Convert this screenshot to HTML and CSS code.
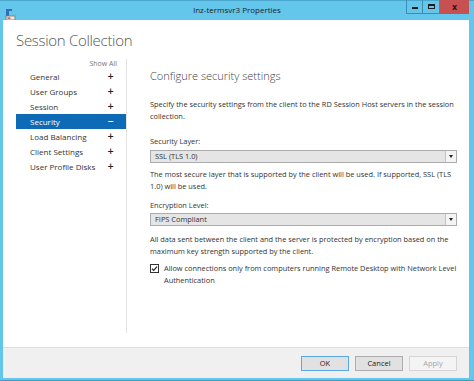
FILE: index.html
```html
<!doctype html>
<html lang="en">
<head>
    <meta charset="UTF-8">
    <title>lnz-termsvr3 Properties</title>
    <link rel="stylesheet" href="styles.css">
</head>
<body>
    <div class="window">
        <!-- Title bar -->
        <div class="titlebar">
            <div class="tb-left">
                <svg class="app-icon" width="11" height="12" viewBox="0 0 11 12">
                    <rect x="1" y="0" width="3" height="8" fill="#2f6fb6"/>
                    <rect x="4" y="0" width="3" height="2" fill="#2f6fb6"/>
                    <rect x="1" y="7" width="9" height="4" fill="#e8e8e8" stroke="#777" stroke-width="0.8"/>
                    <rect x="2.5" y="8.5" width="3" height="1.2" fill="#c0392b"/>
                </svg>
            </div>
            <div class="tb-title">lnz-termsvr3 Properties</div>
            <div class="tb-controls">
                <span class="tb-btn tb-min"><i></i></span>
                <span class="tb-btn tb-max"><i></i></span>
                <span class="tb-btn tb-close">x</span>
            </div>
        </div>

        <div class="client">
            <div class="main">
                <h1 class="collection-title">Session Collection</h1>

                <div class="panes">
                    <!-- Left navigation -->
                    <div class="nav">
                        <div class="show-all">Show All</div>
                        <ul class="nav-list">
                            <li class="nav-item"><span>General</span><span class="sign">+</span></li>
                            <li class="nav-item"><span>User Groups</span><span class="sign">+</span></li>
                            <li class="nav-item"><span>Session</span><span class="sign">+</span></li>
                            <li class="nav-item active"><span>Security</span><span class="sign">&minus;</span></li>
                            <li class="nav-item"><span>Load Balancing</span><span class="sign">+</span></li>
                            <li class="nav-item"><span>Client Settings</span><span class="sign">+</span></li>
                            <li class="nav-item"><span>User Profile Disks</span><span class="sign">+</span></li>
                        </ul>
                    </div>

                    <!-- Security page -->
                    <div class="content">
                        <h2 class="page-title">Configure security settings</h2>
                        <p class="desc">Specify the security settings from the client to the RD Session Host servers in the session collection.</p>

                        <div class="field-label">Security Layer:</div>
                        <div class="combo">
                            <span class="combo-value">SSL (TLS 1.0)</span>
                            <span class="combo-arrow"></span>
                        </div>
                        <p class="note">The most secure layer that is supported by the client will be used. If supported, SSL (TLS 1.0) will be used.</p>

                        <div class="field-label label-enc">Encryption Level:</div>
                        <div class="combo combo-enc">
                            <span class="combo-value">FIPS Compliant</span>
                            <span class="combo-arrow"></span>
                        </div>
                        <p class="note note-enc">All data sent between the client and the server is protected by encryption based on the maximum key strength supported by the client.</p>

                        <div class="check-row">
                            <svg class="checkbox" width="9" height="9" viewBox="0 0 9 9">
                                <rect x="0.5" y="0.5" width="8" height="8" fill="#fff" stroke="#333"/>
                                <path d="M2 4.6 L3.7 6.3 L7 2.6" fill="none" stroke="#222" stroke-width="1.2"/>
                            </svg>
                            <span>Allow connections only from computers running Remote Desktop with Network Level Authentication</span>
                        </div>
                    </div>
                </div>
            </div>

            <!-- Dialog buttons -->
            <div class="buttons">
                <button class="btn btn-default">OK</button>
                <button class="btn">Cancel</button>
                <button class="btn" disabled>Apply</button>
            </div>
        </div>
    </div>
</body>
</html>
```

FILE: styles.css
```css
* {
    margin: 0;
    padding: 0;
    box-sizing: border-box;
}

body {
    font-family: 'Open Sans', 'Noto Sans', sans-serif;
    background-color: #63c6ea;
    color: #333;
    width: 474px;
    height: 381px;
    overflow: hidden;
}

.window {
    display: flex;
    flex-direction: column;
    height: 381px;
    border-top: 1px solid #4aa6cc;
    border-bottom: 1px solid #3f9cc2;
}

/* Title bar */
.titlebar {
    display: grid;
    grid-template-columns: 1fr auto 1fr;
    height: 19px;
}

.tb-left {
    padding: 3px 0 0 5px;
}

.tb-title {
    font-size: 8px;
    line-height: 18px;
    color: #222;
}

.tb-controls {
    display: flex;
    justify-content: flex-end;
    align-items: flex-start;
    padding-right: 5px;
    margin-top: -1px;
}

.tb-btn {
    display: flex;
    align-items: center;
    justify-content: center;
    height: 14px;
    width: 17px;
    border: 1px solid #3d8db0;
    border-top: none;
}

.tb-min i {
    display: block;
    width: 6px;
    height: 2px;
    margin-top: 3px;
    background: #1d1d1d;
}

.tb-max {
    border-left: none;
}

.tb-max i {
    display: block;
    width: 7px;
    height: 5px;
    border: 1px solid #1d1d1d;
    border-top-width: 2px;
}

.tb-close {
    width: 29px;
    background: #c75050;
    border: none;
    color: #3a1010;
    font-family: 'DejaVu Sans', sans-serif;
    font-weight: bold;
    font-size: 8px;
}

/* Client area */
.client {
    flex: 1;
    display: flex;
    flex-direction: column;
    margin: 0 5px 2px 3px;
    background: #fff;
}

.main {
    flex: 1;
    display: flex;
    flex-direction: column;
    padding: 10px 12px 0 13px;
}

.collection-title {
    font-size: 15px;
    font-weight: 300;
    line-height: 20px;
    color: #555;
    letter-spacing: -0.3px;
}

.panes {
    flex: 1;
    display: flex;
    margin: 9px 0 14px;
}

/* Left navigation */
.nav {
    width: 111px;
    flex-shrink: 0;
    border-right: 1px solid #e3e3e3;
}

.show-all {
    font-size: 7px;
    line-height: 10px;
    color: #777;
    text-align: right;
    padding-right: 9px;
}

.nav-list {
    list-style: none;
}

.nav-item {
    display: flex;
    justify-content: space-between;
    align-items: center;
    height: 15px;
    padding: 0 12px 0 14px;
    font-size: 8px;
    color: #333;
}

.nav-item .sign {
    font-family: 'DejaVu Sans', sans-serif;
    font-weight: bold;
    font-size: 8px;
    color: #222;
}

.nav-item.active {
    background: #0e6ab5;
    color: #fff;
}

.nav-item.active .sign {
    color: #fff;
}

/* Security page */
.content {
    flex: 1;
    margin-left: 23px;
    padding-top: 10px;
    font-size: 7.4px;
    line-height: 12px;
    color: #333;
}

.page-title {
    font-size: 11px;
    font-weight: 300;
    line-height: 14px;
    color: #444;
}

.desc {
    margin-top: 15px;
}

.field-label {
    margin-top: 13px;
}

.combo {
    display: flex;
    align-items: center;
    justify-content: space-between;
    height: 13px;
    margin-top: 3px;
    border: 1px solid #acacac;
    background: #e5e5e5;
}

.combo-value {
    padding-left: 4px;
    line-height: 11px;
}

.combo-arrow {
    width: 11px;
    height: 11px;
    border-left: 1px solid #c4c4c4;
    background: #f4f4f4;
    position: relative;
}

.combo-arrow::after {
    content: '';
    position: absolute;
    left: 3px;
    top: 4px;
    border-left: 2px solid transparent;
    border-right: 2px solid transparent;
    border-top: 3px solid #222;
}

.note {
    margin-top: 5px;
}

.label-enc {
    margin-top: 7px;
}

.combo-enc {
    margin-top: 2px;
}

.note-enc {
    margin-top: 8px;
    line-height: 11.5px;
}

.check-row {
    display: flex;
    gap: 5px;
    margin-top: 6px;
    line-height: 11.5px;
}

.checkbox {
    flex-shrink: 0;
    margin-top: 1px;
}

/* Dialog buttons */
.buttons {
    display: flex;
    justify-content: flex-end;
    align-items: center;
    gap: 6px;
    height: 31px;
    padding-right: 12px;
    background: #f0f0f0;
    border-top: 1px solid #dfdfdf;
}

.btn {
    width: 48px;
    height: 15px;
    font-family: 'Open Sans', 'Noto Sans', sans-serif;
    font-size: 7.5px;
    color: #222;
    background: #e1e1e1;
    border: 1px solid #adadad;
}

.btn-default {
    border-color: #5aa7e6;
}

.btn:disabled {
    color: #a6a6a6;
    background: #f4f4f4;
    border-color: #d5d5d5;
}
```
